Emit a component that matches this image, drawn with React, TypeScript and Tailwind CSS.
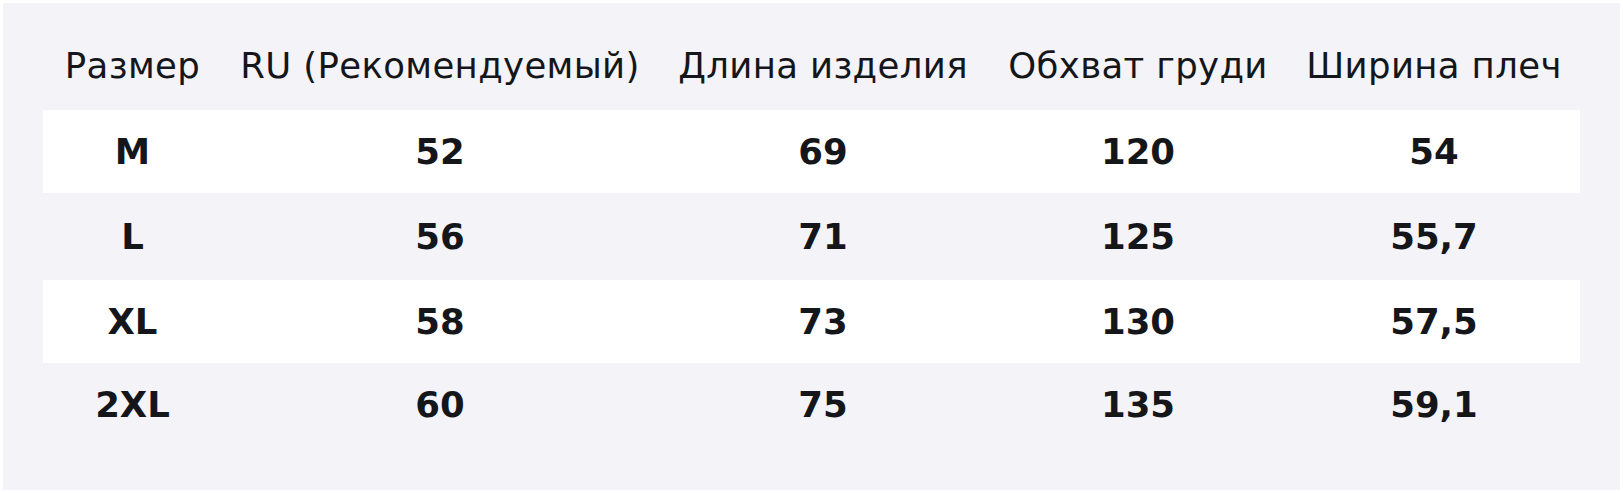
export default function App() {
  const headers = ['Размер', 'RU (Рекомендуемый)', 'Длина изделия', 'Обхват груди', 'Ширина плеч'];

  const rows = [
    { size: 'M', ru: '52', length: '69', chest: '120', shoulders: '54', h: 'h-[83px]' },
    { size: 'L', ru: '56', length: '71', chest: '125', shoulders: '55,7', h: 'h-[87px]' },
    { size: 'XL', ru: '58', length: '73', chest: '130', shoulders: '57,5', h: 'h-[83px]' },
    { size: '2XL', ru: '60', length: '75', chest: '135', shoulders: '59,1', h: 'h-[83px]' },
  ];

  // фиксированные ширины колонок, как в исходной таблице
  const cols = 'grid grid-cols-[179px_436px_330px_300px_292px]';

  return (
    <div className="min-h-screen bg-white p-[3px] font-['DejaVu_Sans',sans-serif] text-[#15161a]">
      <div className="bg-[#f3f3f8] px-10 pt-[19px] pb-[44px]">
        {/* Шапка таблицы */}
        <div className={`${cols} h-[88px] items-center`}>
          {headers.map((h) => (
            <div key={h} className="text-center text-[35.5px] leading-none tracking-[0.35px] whitespace-nowrap">
              {h}
            </div>
          ))}
        </div>

        {/* Строки с размерами */}
        {rows.map((r, i) => (
          <div
            key={r.size}
            className={`${cols} ${r.h} items-center ${i % 2 === 0 ? 'bg-white' : 'bg-transparent'}`}
          >
            {[r.size, r.ru, r.length, r.chest, r.shoulders].map((v, j) => (
              <div key={j} className="text-center text-[35.5px] font-bold leading-none">
                {v}
              </div>
            ))}
          </div>
        ))}
      </div>
    </div>
  );
}
